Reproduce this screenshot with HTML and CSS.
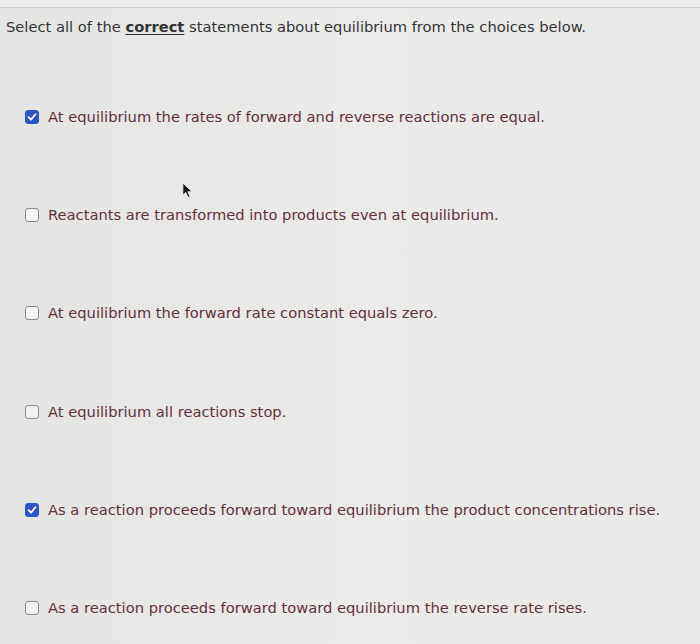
FILE: index.html
```html
<!DOCTYPE html>
<html>
<head>
<meta charset="utf-8">
<link rel="stylesheet" href="styles.css">
</head>
<body>
<div class="page">
  <div class="topbar"></div>
  <div class="question">Select all of the <span class="em">correct</span> statements about equilibrium from the choices below.</div>
  <div class="choices">
    <label class="choice"><span class="box checked"><svg viewBox="0 0 14 14" width="14" height="14"><path d="M3 7.2 L5.8 10 L11 3.8" fill="none" stroke="#fff" stroke-width="2.2" stroke-linecap="round" stroke-linejoin="round"/></svg></span><span class="text">At equilibrium the rates of forward and reverse reactions are equal.</span></label>
    <label class="choice"><span class="box"></span><span class="text">Reactants are transformed into products even at equilibrium.</span></label>
    <label class="choice"><span class="box"></span><span class="text">At equilibrium the forward rate constant equals zero.</span></label>
    <label class="choice"><span class="box"></span><span class="text">At equilibrium all reactions stop.</span></label>
    <label class="choice"><span class="box checked"><svg viewBox="0 0 14 14" width="14" height="14"><path d="M3 7.2 L5.8 10 L11 3.8" fill="none" stroke="#fff" stroke-width="2.2" stroke-linecap="round" stroke-linejoin="round"/></svg></span><span class="text">As a reaction proceeds forward toward equilibrium the product concentrations rise.</span></label>
    <label class="choice"><span class="box"></span><span class="text">As a reaction proceeds forward toward equilibrium the reverse rate rises.</span></label>
  </div>
  <svg class="cursor" viewBox="0 0 12 18" width="11" height="17"><path d="M1 1 L1 14 L4.2 11 L6.6 16.5 L8.6 15.6 L6.3 10.3 L10.6 10.2 Z" fill="#111" stroke="#eee" stroke-width="0.8"/></svg>
</div>
</body>
</html>
```

FILE: styles.css
```css
html, body {
  margin: 0;
  padding: 0;
}
body {
  width: 700px;
  height: 644px;
  overflow: hidden;
  background: #e7e7e5;
  font-family: "DejaVu Sans", Verdana, sans-serif;
}
.page {
  position: relative;
  height: 644px;
  background: linear-gradient(90deg, #e4e5e3 0%, #ebebea 50%, #e9e9e8 100%);
}
.topbar {
  height: 7px;
  background: #ededec;
  border-bottom: 1px solid #cfcfcd;
}
.question {
  padding: 10px 0 0 6px;
  font-size: 14.7px;
  color: #333335;
  line-height: 18px;
}
.em {
  font-weight: bold;
  text-decoration: underline;
  text-underline-offset: 2px;
}
.choices {
  display: flex;
  flex-direction: column;
  gap: 80.2px;
  padding: 72px 0 0 25px;
}
.choice {
  display: flex;
  align-items: center;
  gap: 9px;
  height: 18px;
}
.box {
  width: 12px;
  height: 12px;
  border: 1.5px solid #8a8a8c;
  border-radius: 3px;
  background: #f3f3f2;
  display: flex;
  align-items: center;
  justify-content: center;
}
.box.checked {
  background: #2c55c9;
  border-color: #2c55c9;
}
.box svg {
  width: 12px;
  height: 12px;
}
.text {
  font-size: 14.7px;
  color: #62303b;
  line-height: 18px;
}
.cursor {
  position: absolute;
  left: 182px;
  top: 182px;
}
```
